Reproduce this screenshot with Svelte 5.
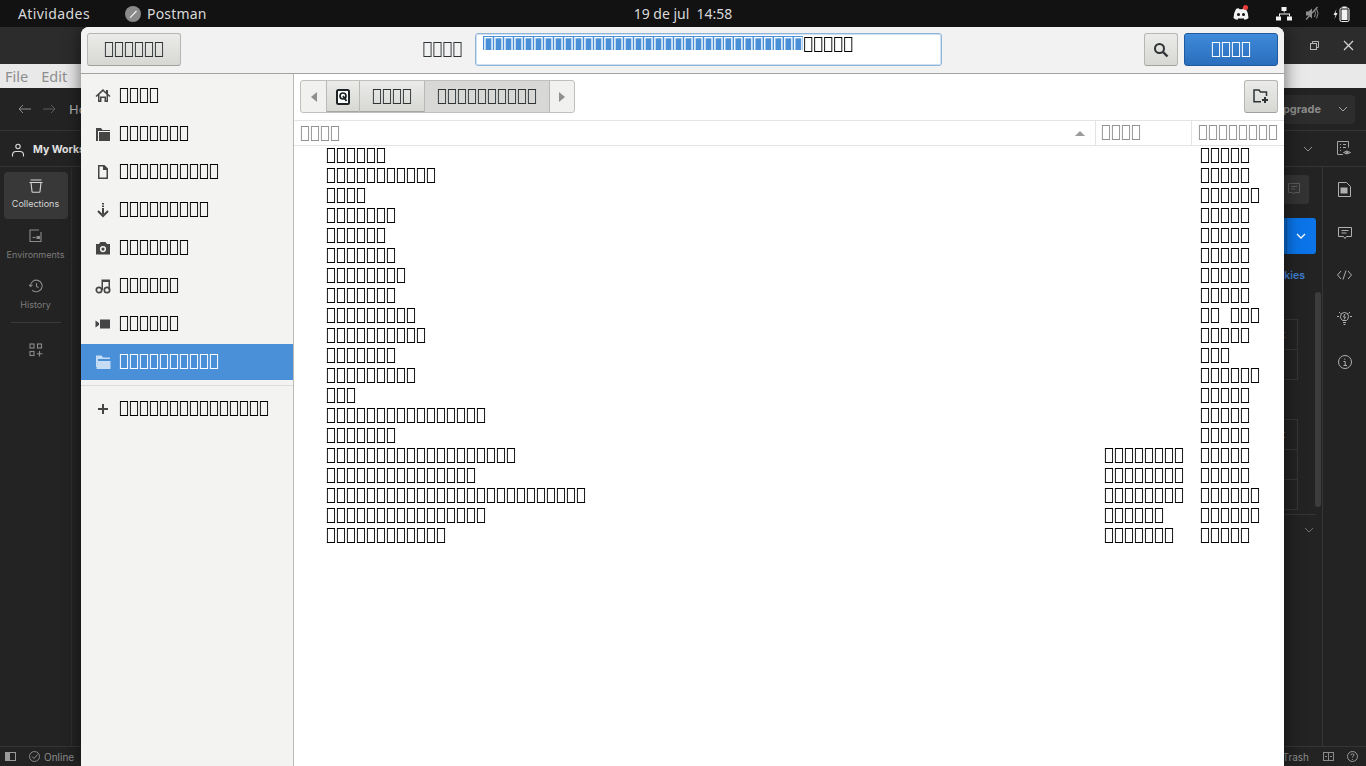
<script>
    // caixas "tofu": caractere sem glifo, como no print original
    const tofu = (n) => "\uE000".repeat(n);

    const lugares = [
        { icon: "home", n: 4 },
        { icon: "folder", n: 7 },
        { icon: "doc", n: 10 },
        { icon: "down", n: 9 },
        { icon: "camera", n: 7 },
        { icon: "music", n: 6 },
        { icon: "video", n: 6 },
        { icon: "open", n: 10, selected: true }
    ];

    // [nome, tamanho, modificado]
    const arquivos = [
        [6, 0, 5], [11, 0, 5], [4, 0, 6], [7, 0, 5], [6, 0, 5],
        [7, 0, 5], [8, 0, 5], [7, 0, 5], [9, 0, "2 3"], [10, 0, 5],
        [7, 0, 3], [9, 0, 6], [3, 0, 5], [16, 0, 5], [7, 0, 5],
        [19, 8, 5], [15, 8, 5], [26, 8, 6], [16, 6, 6], [12, 7, 5]
    ];

    const modificado = (m) => typeof m === "string"
        ? m.split(" ").map((p) => tofu(Number(p))).join(" ")
        : tofu(m);
</script>

<div class="screen">
    <div class="topbar">
        <div class="top-left">
            <span class="atividades">Atividades</span>
            <span class="app-name">
                <svg width="18" height="18" viewBox="0 0 18 18">
                    <circle cx="9" cy="9" r="8" fill="#8a8a8a"/>
                    <path d="M5.500 12.500 L12 5.500 L13 6.500 L6.500 13 Z" fill="#eee"/>
                </svg>
                Postman
            </span>
        </div>
        <div class="clock">19 de jul&nbsp; 14:58</div>
        <div class="tray">
            <span class="discord">
                <svg width="16" height="12" viewBox="0 0 16 12">
                    <path d="M3 1 Q5 0 6 .5 L6.500 1.200 H9.500 L10 .5 Q11 0 13 1 Q15.500 5 15.500 10 Q14 11.500 11.500 11.800 L10.500 10.200 Q8 11 5.500 10.200 L4.500 11.800 Q2 11.500 .5 10 Q.5 5 3 1 Z" fill="#f2f2f2"/>
                    <circle cx="5.500" cy="6.500" r="1.500" fill="#111"/>
                    <circle cx="10.500" cy="6.500" r="1.500" fill="#111"/>
                </svg>
                <i class="dot"></i>
            </span>
            <svg class="net" width="16" height="14" viewBox="0 0 16 14" fill="#f2f2f2">
                <rect x="5.500" y="0" width="5" height="4"/>
                <rect x="0" y="9.500" width="5" height="4"/>
                <rect x="11" y="9.500" width="5" height="4"/>
                <path d="M7.500 4h1v2.500h5.500v3h-1v-2h-9v2h-1v-3h5.500z"/>
            </svg>
            <svg class="vol" width="15" height="15" viewBox="0 0 15 15" fill="none">
                <path d="M1 5.500h2.500L7 2.500v10L3.500 9.500H1z" fill="#8e8e8e"/>
                <path d="M9.500 4q2 3.500 0 7M11.500 2.500q3 5 0 10" stroke="#8e8e8e"/>
                <path d="M1 13.500 L12.500 1" stroke="#8e8e8e" stroke-width="1.200"/>
            </svg>
            <svg class="bat" width="17" height="16" viewBox="0 0 17 16">
                <path d="M3.500 3 L0.500 9h2l-1 4 L4.500 7h-2z" fill="#f2f2f2"/>
                <rect x="7" y="2" width="9" height="13.500" rx="1.500" fill="none" stroke="#f2f2f2"/>
                <rect x="9.500" y="0.500" width="4" height="1.500" fill="#f2f2f2"/>
                <rect x="8.500" y="3.500" width="6" height="10.500" fill="#f2f2f2"/>
            </svg>
        </div>
    </div>

    <div class="app">
        <div class="titlebar">
            <svg width="10" height="10" viewBox="0 0 10 10" fill="none" stroke="#b5b5b5">
                <rect x="0.500" y="2.500" width="6" height="6"/>
                <path d="M2.500 2.500v-2h6v6h-2"/>
            </svg>
            <svg width="11" height="11" viewBox="0 0 11 11" stroke="#d5d5d5" stroke-width="1.200">
                <path d="M1 1 L10 10 M10 1 L1 10"/>
            </svg>
        </div>
        <div class="menubar"><span>File</span><span>Edit</span></div>
        <div class="header">
            <svg width="13" height="10" viewBox="0 0 13 10" fill="none" stroke="#8d8d8d"><path d="M13 5H1M5 1 1 5l4 4"/></svg>
            <svg width="13" height="10" viewBox="0 0 13 10" fill="none" stroke="#5c5c5c"><path d="M0 5h12M8 1l4 4-4 4"/></svg>
            <span class="ho">Home</span>
            <div class="upgrade">
                <span>Upgrade</span>
                <svg width="10" height="6" viewBox="0 0 10 6" fill="none" stroke="#a5a5a5"><path d="M1 1l4 4 4-4"/></svg>
            </div>
        </div>
        <div class="workspace">
            <div class="ws-name">
                <svg width="14" height="14" viewBox="0 0 14 14" fill="none" stroke="#dcdcdc" stroke-width="1.100">
                    <circle cx="7" cy="3.500" r="2.200"/>
                    <path d="M1.500 13.500v-1.500q0-3.500 3.500-3.500h4q3.500 0 3.500 3.500v1.500"/>
                </svg>
                <b>My Workspace</b>
            </div>
            <div class="ws-right">
                <svg class="ws-chev" width="10" height="6" viewBox="0 0 10 6" fill="none" stroke="#8d8d8d"><path d="M1 1l4 4 4-4"/></svg>
                <span class="rail-cell">
                    <svg width="14" height="15" viewBox="0 0 14 15" fill="none" stroke="#a5a5a5">
                        <path d="M6 13.500H.5V.5h11v6M3 3.500h1M6 3.500h3M3 6.500h1M6 6.500h3M3 9.500h1"/>
                        <path d="M6.500 11.500q3-3 7 0-4 3-7 0z"/><circle cx="10" cy="11.500" r="1" fill="#a5a5a5"/>
                    </svg>
                </span>
            </div>
        </div>
        <div class="main">
            <nav class="side">
                <div class="side-item active">
                    <svg width="14" height="14" viewBox="0 0 14 14" fill="none" stroke="#d6d6d6" stroke-width="1.100">
                        <path d="M1.500 1h11M.5 3.500h13M2 3.500l1 9q0 .8 1 .8h6q1 0 1-.8l1-9"/>
                    </svg>
                    <span>Collections</span>
                </div>
                <div class="side-item">
                    <svg width="14" height="14" viewBox="0 0 14 14" fill="none" stroke="#8b8b8b" stroke-width="1.100">
                        <path d="M10 1H1v11.500h11V3"/>
                        <rect x="8" y="7.500" width="2.500" height="2" fill="#8b8b8b"/>
                        <path d="M3.500 8.500h3"/>
                    </svg>
                    <span>Environments</span>
                </div>
                <div class="side-item">
                    <svg width="14" height="14" viewBox="0 0 14 14" fill="none" stroke="#8b8b8b" stroke-width="1.100">
                        <path d="M1.500 7a5.800 5.800 0 1 1 1.700 4.100M0 5.500 1.500 7.500 3.500 5.800M7.500 4v3.500l2 1"/>
                    </svg>
                    <span>History</span>
                </div>
                <div class="side-sep"></div>
                <svg class="apps" width="14" height="14" viewBox="0 0 14 14" fill="none" stroke="#8b8b8b" stroke-width="1.100">
                    <rect x="1" y="1" width="4" height="4"/>
                    <rect x="8.500" y="1" width="4" height="4"/>
                    <rect x="1" y="8.500" width="4" height="4"/>
                    <path d="M10.500 8v5.500M8 10.700h5.500"/>
                </svg>
            </nav>
            <div class="pane">
                <div class="pane-body">
                    <div class="comment-btn">
                        <svg width="12" height="13" viewBox="0 0 12 13" fill="none" stroke="#5a5a5a">
                            <path d="M.5.500h11v9H7L6 11 5 9.500H.5zM3 3.500h6M3 6h4"/>
                        </svg>
                    </div>
                    <div class="send-btn">
                        <span class="send-main"></span>
                        <span class="send-arrow">
                            <svg width="10" height="6" viewBox="0 0 10 6" fill="none" stroke="#fff" stroke-width="1.300"><path d="M1 1l4 4 4-4"/></svg>
                        </span>
                    </div>
                    <div class="cookies">Cookies</div>
                    <div class="params">
                        <div class="param-box">
                            <div class="param-row"><em>t</em></div>
                            <div class="param-row"></div>
                        </div>
                        <div class="param-box second">
                            <div class="param-row"><em>t</em></div>
                            <div class="param-row"></div>
                            <div class="param-row"></div>
                        </div>
                    </div>
                    <div class="console">
                        <svg width="10" height="6" viewBox="0 0 10 6" fill="none" stroke="#6e6e6e"><path d="M1 1l4 4 4-4"/></svg>
                    </div>
                </div>
                <div class="scroll"></div>
            </div>
            <aside class="rail">
                <svg width="13" height="15" viewBox="0 0 13 15" fill="none" stroke="#b0b0b0">
                    <path d="M.5.500h8l4 4v10H.5z"/><rect x="3" y="6" width="6" height="5" fill="#b0b0b0"/>
                </svg>
                <svg width="14" height="13" viewBox="0 0 14 13" fill="none" stroke="#b0b0b0">
                    <path d="M.5.500h13v9H8.500L7 11.500 5.500 9.500H.5zM3.500 3.500h7M3.500 6h5"/>
                </svg>
                <svg width="15" height="10" viewBox="0 0 15 10" fill="none" stroke="#b0b0b0">
                    <path d="M4 1 .5 5 4 9M11 1l3.500 4L11 9M9 .5 6 9.500"/>
                </svg>
                <svg width="15" height="15" viewBox="0 0 15 15" fill="none" stroke="#b0b0b0">
                    <path d="M5.500 10.500q-2-1.500-2-4a4 4 0 0 1 8 0q0 2.500-2 4zM6 12.500h3M6.500 14.500h2M0 6.500h2M13 6.500h2M2 2l1.500 1.500M13 2l-1.500 1.500"/>
                    <path d="M8 4 6.500 7h2L7 9.500" />
                </svg>
                <svg width="14" height="14" viewBox="0 0 14 14" fill="none" stroke="#b0b0b0">
                    <circle cx="7" cy="7" r="6.500"/>
                    <path d="M5.500 6.500H7.200V10.500M5.500 10.500H9M6.800 3.500v1.200" />
                </svg>
            </aside>
        </div>
        <div class="status">
            <svg width="11" height="9" viewBox="0 0 11 9" fill="none" stroke="#9a9a9a"><rect x=".5" y=".5" width="10" height="8"/><rect x="1.500" y="1.500" width="3" height="6" fill="#9a9a9a"/></svg>
            <span class="online">
                <svg width="11" height="11" viewBox="0 0 11 11" fill="none" stroke="#8a8a8a"><circle cx="5.500" cy="5.500" r="5"/><path d="M3 5.500l2 2 3.500-4"/></svg>
                Online
            </span>
            <span class="trash">Trash</span>
            <svg width="11" height="9" viewBox="0 0 11 9" fill="none" stroke="#8a8a8a"><rect x=".5" y=".5" width="10" height="8"/><path d="M5.500 0v9M2 4.500h2M7 4.500h2"/></svg>
            <svg class="help" width="11" height="11" viewBox="0 0 11 11" fill="none" stroke="#9a9a9a"><circle cx="5.500" cy="5.500" r="5"/><path d="M4 4.200q.2-1.500 1.500-1.500t1.500 1.300q0 1-1.500 1.700v.8M5.500 8v.8"/></svg>
        </div>
    </div>

    <!-- dialogo GTK por cima da janela do Postman -->
    <div class="dialog">
        <div class="dlg-head">
            <button class="btn cancel"><span>{tofu(6)}</span></button>
            <div class="name-field">
                <span class="name-label">{tofu(4)}</span>
                <div class="name-input"><span class="sel">{tofu(32)}</span>{tofu(5)}</div>
            </div>
            <button class="btn search">
                <svg width="16" height="16" viewBox="0 0 16 16" fill="none" stroke="#2e3436" stroke-width="2">
                    <circle cx="6.500" cy="6.500" r="4.500"/>
                    <path d="M10 10l4.500 4.500" stroke-width="2.400"/>
                </svg>
            </button>
            <button class="btn open-btn"><span>{tofu(4)}</span></button>
        </div>
        <div class="dlg-body">
            <div class="places">
                <div class="place-list">
                    {#each lugares as l}
                        <div class="place" class:selected={l.selected}>
                            <svg width="16" height="16" viewBox="0 0 16 16" fill="#454545">
                                {#if l.icon === "home"}
                                    <path d="M8 1 .5 8l1 1L3 7.700V14h3.500v-4h3v4H13V7.700L14.500 9l1-1L13 5.700V2h-2v1.900zM8 3.300l3.500 3.200v6H11V8.500H5v4h-.5V6.500z" fill-rule="evenodd"/>
                                {:else if l.icon === "folder"}
                                    <path d="M1 2h5l1.500 2H15v1H3v10H1z M4 6h11v9H4z"/>
                                {:else if l.icon === "doc"}
                                    <path d="M3 1h6.500L13 4.500V15H3z M4.500 2.500v11h7V6H8V2.500z" fill-rule="evenodd"/>
                                {:else if l.icon === "down"}
                                    <path d="M7 1h2v1.500H7z M7 3.500h2V5H7z M7 6h2v6H7z"/>
                                    <path d="M3 9l5 5 5-5" fill="none" stroke="#454545" stroke-width="2"/>
                                {:else if l.icon === "camera"}
                                    <path d="M5.500 2h5L12 4h3v10.500H1V4h3z M8 6a3 3 0 1 0 0 6.200A3 3 0 0 0 8 6z M8 7.500a1.600 1.600 0 1 1 0 3.200 1.600 1.600 0 0 1 0-3.200z" fill-rule="evenodd"/>
                                {:else if l.icon === "music"}
                                    <path d="M6.500 1.500H15V12h-1.500V4h-5.500V12H6.500z"/>
                                    <circle cx="4" cy="12" r="2.700" fill="none" stroke="#454545" stroke-width="1.700"/>
                                    <circle cx="12" cy="12" r="2.700" fill="none" stroke="#454545" stroke-width="1.700"/>
                                {:else if l.icon === "video"}
                                    <path d="M5 3.500h10v9H5z M0.500 4.500 4 7v2L.5 11.500z"/>
                                {:else if l.icon === "open"}
                                    <path d="M1 1.500h5.500l1.500 2h7V5H3v1L1.800 13H1z" fill="#c6dcf5"/>
                                    <path d="M2.500 7h13v8H1.500z" fill="#c6dcf5"/>
                                {/if}
                            </svg>
                            <span>{tofu(l.n)}</span>
                        </div>
                    {/each}
                </div>
                <div class="places-sep"></div>
                <div class="place">
                    <svg width="16" height="16" viewBox="0 0 16 16" fill="#454545"><path d="M7 3h2v4h4v2H9v4H7V9H3V7h4z"/></svg>
                    <span>{tofu(15)}</span>
                </div>
            </div>
            <div class="files">
                <div class="toolbar">
                    <div class="pathbar">
                        <span class="crumb arrow first">
                            <svg width="6" height="10" viewBox="0 0 6 10" fill="#8f918f"><path d="M6 0v10L0 5z"/></svg>
                        </span>
                        <span class="crumb raised disk">
                            <svg width="14" height="16" viewBox="0 0 14 16">
                                <rect x="1" y="1" width="12" height="14" rx="1.500" fill="#fff" stroke="#1d2224" stroke-width="2"/>
                                <circle cx="7" cy="7" r="3" fill="none" stroke="#1d2224" stroke-width="1.700"/>
                                <path d="M7 7l3.500 5" stroke="#1d2224" stroke-width="1.800"/>
                            </svg>
                        </span>
                        <span class="crumb raised"><span>{tofu(4)}</span></span>
                        <span class="crumb current"><span>{tofu(10)}</span></span>
                        <span class="crumb arrow last">
                            <svg width="6" height="10" viewBox="0 0 6 10" fill="#8f918f"><path d="M0 0v10l6-5z"/></svg>
                        </span>
                    </div>
                    <button class="btn newfolder">
                        <svg width="16" height="15" viewBox="0 0 16 15" fill="none" stroke="#2e3436" stroke-width="1.500">
                            <path d="M8 12.700H1V1h5l1.500 2H13.500v4"/>
                            <path d="M12 8v6M9 11h6" stroke-width="2"/>
                        </svg>
                    </button>
                </div>
                <div class="list-head">
                    <div class="col-name">
                        <span>{tofu(4)}</span>
                        <svg width="10" height="5" viewBox="0 0 10 5" fill="#9a9c9a"><path d="M5 0l5 5H0z"/></svg>
                    </div>
                    <div class="col-size">{tofu(4)}</div>
                    <div class="col-mod">{tofu(8)}</div>
                </div>
                <div class="rows">
                    {#each arquivos as a}
                        <div class="row">
                            <span class="cell-name">{tofu(a[0])}</span>
                            <span class="cell-size">{a[1] ? tofu(a[1]) : ""}</span>
                            <span class="cell-mod">{modificado(a[2])}</span>
                        </div>
                    {/each}
                </div>
            </div>
        </div>
    </div>
</div>

<style>
    :global(body) {
        background-color: #111;
        overflow: hidden;
    }

    .screen {
        position: relative;
        width: 1366px;
        height: 766px;
        overflow: hidden;
        display: flex;
        flex-direction: column;
        font-family: "Noto Sans", sans-serif;
    }

    .topbar {
        position: relative;
        z-index: 2;
        height: 27px;
        flex: none;
        background-color: #121212;
        color: #d9d9d9;
        display: grid;
        grid-template-columns: 1fr auto 1fr;
        align-items: center;
        font-size: 14px;
    }

    .top-left {
        display: flex;
        align-items: center;
        padding-left: 18px;
    }

    .atividades {
        letter-spacing: 0.4px;
    }

    .app-name {
        display: flex;
        align-items: center;
        gap: 5px;
        margin-left: 34px;
        letter-spacing: 0.2px;
    }

    .clock {
        font-size: 14px;
    }

    .tray {
        display: flex;
        justify-content: flex-end;
        align-items: center;
        padding-right: 16px;
    }

    .discord {
        position: relative;
        display: flex;
        margin-right: 27px;
    }

    .dot {
        position: absolute;
        top: -3px;
        right: 1px;
        width: 5px;
        height: 5px;
        border-radius: 50%;
        background-color: #ed3b3b;
    }

    .net {
        margin-right: 13px;
    }

    .vol {
        margin-right: 13px;
    }

    .app {
        flex: 1;
        display: flex;
        flex-direction: column;
        background-color: #232323;
        min-height: 0;
    }

    .titlebar {
        height: 37px;
        flex: none;
        background-color: #2c2c2c;
        display: flex;
        justify-content: flex-end;
        align-items: center;
        gap: 23px;
        padding-right: 12px;
    }

    .menubar {
        height: 24px;
        flex: none;
        background-color: #e9e9e9;
        color: #8e8e8e;
        display: flex;
        align-items: center;
        gap: 13px;
        padding-left: 5px;
        font-size: 14.500px;
    }

    .header {
        height: 42px;
        flex: none;
        display: flex;
        align-items: center;
        gap: 12px;
        padding-left: 18px;
        padding-right: 11px;
        border-bottom: 1px solid #353535;
        background-color: #232323;
    }

    .ho {
        color: #b9b9b9;
        font-size: 13px;
        margin-left: 1px;
    }

    .upgrade {
        margin-left: auto;
        width: 100px;
        height: 29px;
        border-radius: 4px;
        background-color: #2d2d2d;
        color: #8b8b8b;
        font-size: 11px;
        font-weight: 700;
        font-family: Inter, sans-serif;
        display: flex;
        align-items: center;
        justify-content: flex-end;
        gap: 17px;
        padding-right: 7px;
        box-sizing: border-box;
    }

    .workspace {
        height: 35px;
        flex: none;
        display: flex;
        align-items: center;
        justify-content: space-between;
        border-bottom: 1px solid #353535;
    }

    .ws-name {
        display: flex;
        align-items: center;
        gap: 8px;
        padding-left: 11px;
        padding-top: 2px;
        color: #e4e4e4;
        font-size: 10.500px;
        font-family: Inter, sans-serif;
        white-space: nowrap;
    }

    .ws-right {
        display: flex;
        align-items: center;
        height: 100%;
    }

    .ws-chev {
        margin-right: 9px;
    }

    .rail-cell {
        width: 44px;
        height: 100%;
        display: flex;
        align-items: center;
        justify-content: center;
    }

    .main {
        flex: 1;
        display: flex;
        min-height: 0;
    }

    .side {
        width: 72px;
        flex: none;
        border-right: 1px solid #2e2e2e;
        display: flex;
        flex-direction: column;
        align-items: center;
        padding-top: 5px;
        box-sizing: border-box;
    }

    .side-item {
        width: 64px;
        height: 47px;
        margin-bottom: 3px;
        padding-bottom: 3px;
        box-sizing: border-box;
        border-radius: 4px;
        display: flex;
        flex-direction: column;
        align-items: center;
        justify-content: center;
        gap: 6px;
        color: #7d7d7d;
        font-size: 9px;
        font-family: Inter, sans-serif;
    }

    .side-item > span {
        line-height: 11px;
    }

    .side-item.active {
        background-color: #383838;
        color: #d6d6d6;
        gap: 5px;
    }

    .side-sep {
        width: 50px;
        height: 1px;
        background-color: #3a3a3a;
    }

    .apps {
        margin-top: 20px;
    }

    .pane {
        flex: 1;
        display: flex;
        justify-content: flex-end;
        gap: 1px;
        padding-right: 1px;
        min-width: 0;
    }

    .pane-body {
        width: 120px;
        margin-right: -2px;
        display: flex;
        flex-direction: column;
        align-items: flex-end;
    }

    .comment-btn {
        margin-top: 8px;
        margin-right: 7px;
        width: 40px;
        height: 29px;
        border-radius: 3px;
        background-color: #333;
        display: flex;
        align-items: center;
        justify-content: center;
        box-sizing: border-box;
        padding-left: 10px;
    }

    .send-btn {
        margin-top: 14px;
        width: 60px;
        height: 36px;
        border-radius: 3px;
        overflow: hidden;
        display: flex;
    }

    .send-main {
        flex: 1;
        background-color: #0a6cd6;
    }

    .send-arrow {
        width: 30px;
        box-sizing: border-box;
        border-left: 1px solid #075cb8;
        background-color: #0a74e8;
        display: flex;
        align-items: center;
        justify-content: flex-end;
        padding-right: 10px;
    }

    .cookies {
        margin-top: 15px;
        margin-right: 11px;
        color: #3f80d4;
        font-size: 10.500px;
        font-weight: 600;
        font-family: Inter, sans-serif;
    }

    .params {
        margin-top: 37px;
        margin-right: 18px;
        width: 60px;
    }

    .param-box {
        border: 1px solid #353535;
        margin-bottom: 39px;
    }

    .param-box.second {
        margin-bottom: 0;
    }

    .param-row {
        height: 29px;
        border-bottom: 1px solid #353535;
        text-align: right;
        padding-right: 12px;
        font-size: 10px;
    }

    .param-row:last-child {
        border-bottom: none;
    }

    .param-row em {
        color: #a0642c;
        font-style: normal;
        line-height: 29px;
    }

    .console {
        margin-top: 4px;
        width: 100%;
        border-top: 1px solid #353535;
        height: 30px;
        display: flex;
        align-items: center;
        justify-content: flex-end;
        padding-right: 2px;
        box-sizing: border-box;
    }

    .scroll {
        width: 6px;
        height: 215px;
        margin-top: 125px;
        background-color: #3d3d3d;
        border-radius: 3px;
    }

    .rail {
        width: 44px;
        flex: none;
        border-left: 1px solid #353535;
        box-sizing: border-box;
        display: flex;
        flex-direction: column;
        align-items: center;
        gap: 30px;
        padding-top: 15px;
    }

    .status {
        height: 19px;
        flex: none;
        border-top: 1px solid #353535;
        display: flex;
        align-items: center;
        padding-left: 5px;
        padding-right: 8px;
        color: #8a8a8a;
        font-size: 10px;
        font-family: Inter, sans-serif;
    }

    .online {
        display: flex;
        align-items: center;
        gap: 4px;
        margin-left: 13px;
    }

    .trash {
        margin-left: auto;
        margin-right: 14px;
    }

    .help {
        margin-left: 13px;
    }

    .dialog {
        position: absolute;
        left: 81px;
        top: 27px;
        width: 1203px;
        height: 739px;
        background-color: #fff;
        border-radius: 8px 8px 0 0;
        box-shadow: 0 0 18px rgba(0, 0, 0, 0.55);
        display: flex;
        flex-direction: column;
        overflow: hidden;
        font-family: "DejaVu Sans", sans-serif;
        font-size: 16.664px;
        color: #000;
        will-change: transform;
    }

    .dlg-head {
        flex: none;
        background-color: #f2f2f2;
        border-bottom: 1px solid #a5a5a0;
        display: flex;
        align-items: flex-start;
        padding: 6px 6px 0 6px;
        box-sizing: border-box;
        height: 47px;
    }

    .btn {
        height: 33px;
        padding: 0;
        border: 1px solid #b6b6b3;
        border-bottom-color: #a0a09c;
        border-radius: 3px;
        background: linear-gradient(#ebebe9, #d7d7d4);
        color: #2e3436;
        font-family: inherit;
        font-size: inherit;
        line-height: 30px;
        display: flex;
        align-items: center;
        justify-content: center;
        box-sizing: border-box;
    }

    .btn span,
    .crumb span,
    .name-label {
        padding-bottom: 2px;
    }

    .place span {
        padding-bottom: 4px;
    }

    .cancel {
        width: 94px;
    }

    .name-field {
        flex: 1;
        display: flex;
        align-items: center;
        justify-content: center;
        gap: 13px;
        height: 33px;
        padding-left: 40px;
    }

    .name-label {
        color: #2e3436;
    }

    .name-input {
        width: 467px;
        height: 33px;
        box-sizing: border-box;
        background-color: #fff;
        border: 1px solid #8fb4da;
        border-radius: 3px;
        padding: 2px 0 0 7px;
        line-height: 14px;
        box-shadow: inset 0 0 0 1px #cfe0f2;
        white-space: nowrap;
    }

    .sel {
        background-color: #4a90d9;
        color: #fff;
        display: inline-block;
        height: 14px;
        line-height: 15px;
        -webkit-text-stroke: 0.3px #fff;
    }

    .search {
        width: 34px;
        margin-right: 6px;
    }

    .open-btn {
        width: 94px;
        background: linear-gradient(#3f8ad9, #2a6ebd);
        border-color: #1f5a9e;
        color: #fff;
    }

    .dlg-body {
        flex: 1;
        display: flex;
        min-height: 0;
    }

    .places {
        width: 213px;
        flex: none;
        box-sizing: border-box;
        background-color: #f3f3f1;
        border-right: 1px solid #b9b9b6;
        padding-top: 4px;
    }

    .place-list {
        display: flex;
        flex-direction: column;
        gap: 2px;
    }

    .place {
        height: 36px;
        display: flex;
        align-items: center;
        gap: 8px;
        padding-left: 14px;
    }

    .place.selected {
        background-color: #4a90d9;
        color: #fff;
    }

    .places-sep {
        height: 1px;
        margin-top: 5px;
        margin-bottom: 5px;
        background-color: #dcdcda;
    }

    .files {
        flex: 1;
        min-width: 0;
        display: flex;
        flex-direction: column;
    }

    .toolbar {
        display: flex;
        justify-content: space-between;
        padding: 6px 6px 7px 6px;
    }

    .pathbar {
        display: flex;
        height: 33px;
        box-sizing: border-box;
        border: 1px solid #c0c0bd;
        border-radius: 3px;
        background-color: #f1f1f0;
        color: #2e3436;
    }

    .crumb {
        display: flex;
        align-items: center;
        justify-content: center;
        border-right: 1px solid #b9b9b6;
        padding: 0 12px;
    }

    .crumb.arrow {
        width: 25px;
        padding: 0;
        box-sizing: border-box;
    }

    .crumb.first {
        width: 26px;
    }

    .crumb.last {
        width: 24px;
        border-right: none;
    }

    .crumb.raised {
        background: linear-gradient(#ebebe9, #d7d7d4);
        box-shadow: inset 0 -1px 0 #a5a5a2;
    }

    .crumb.disk {
        width: 33px;
        padding: 0;
        box-sizing: border-box;
    }

    .crumb.current {
        background-color: #d8d8d6;
    }

    .newfolder {
        width: 34px;
    }

    .list-head {
        height: 26px;
        flex: none;
        box-sizing: border-box;
        display: flex;
        color: #929292;
        border-top: 1px solid #e4e4e4;
        border-bottom: 1px solid #e4e4e4;
        line-height: 21px;
    }

    .col-name {
        flex: 1;
        display: flex;
        justify-content: space-between;
        align-items: center;
        padding: 0 10px 0 6px;
        border-right: 1px solid #e4e4e4;
    }

    .col-name span {
        padding-bottom: 2px;
    }

    .col-size {
        width: 96px;
        padding-left: 5px;
        box-sizing: border-box;
        border-right: 1px solid #e4e4e4;
    }

    .col-mod {
        width: 92px;
        padding-left: 6px;
        box-sizing: border-box;
    }

    .row {
        height: 20px;
        line-height: 18px;
        display: flex;
        white-space: pre;
        word-spacing: 4.700px;
    }

    .cell-name {
        flex: 1;
        padding-left: 32px;
    }

    .cell-size {
        width: 96px;
        box-sizing: border-box;
    }

    .cell-mod {
        width: 84px;
        box-sizing: border-box;
    }
</style>
